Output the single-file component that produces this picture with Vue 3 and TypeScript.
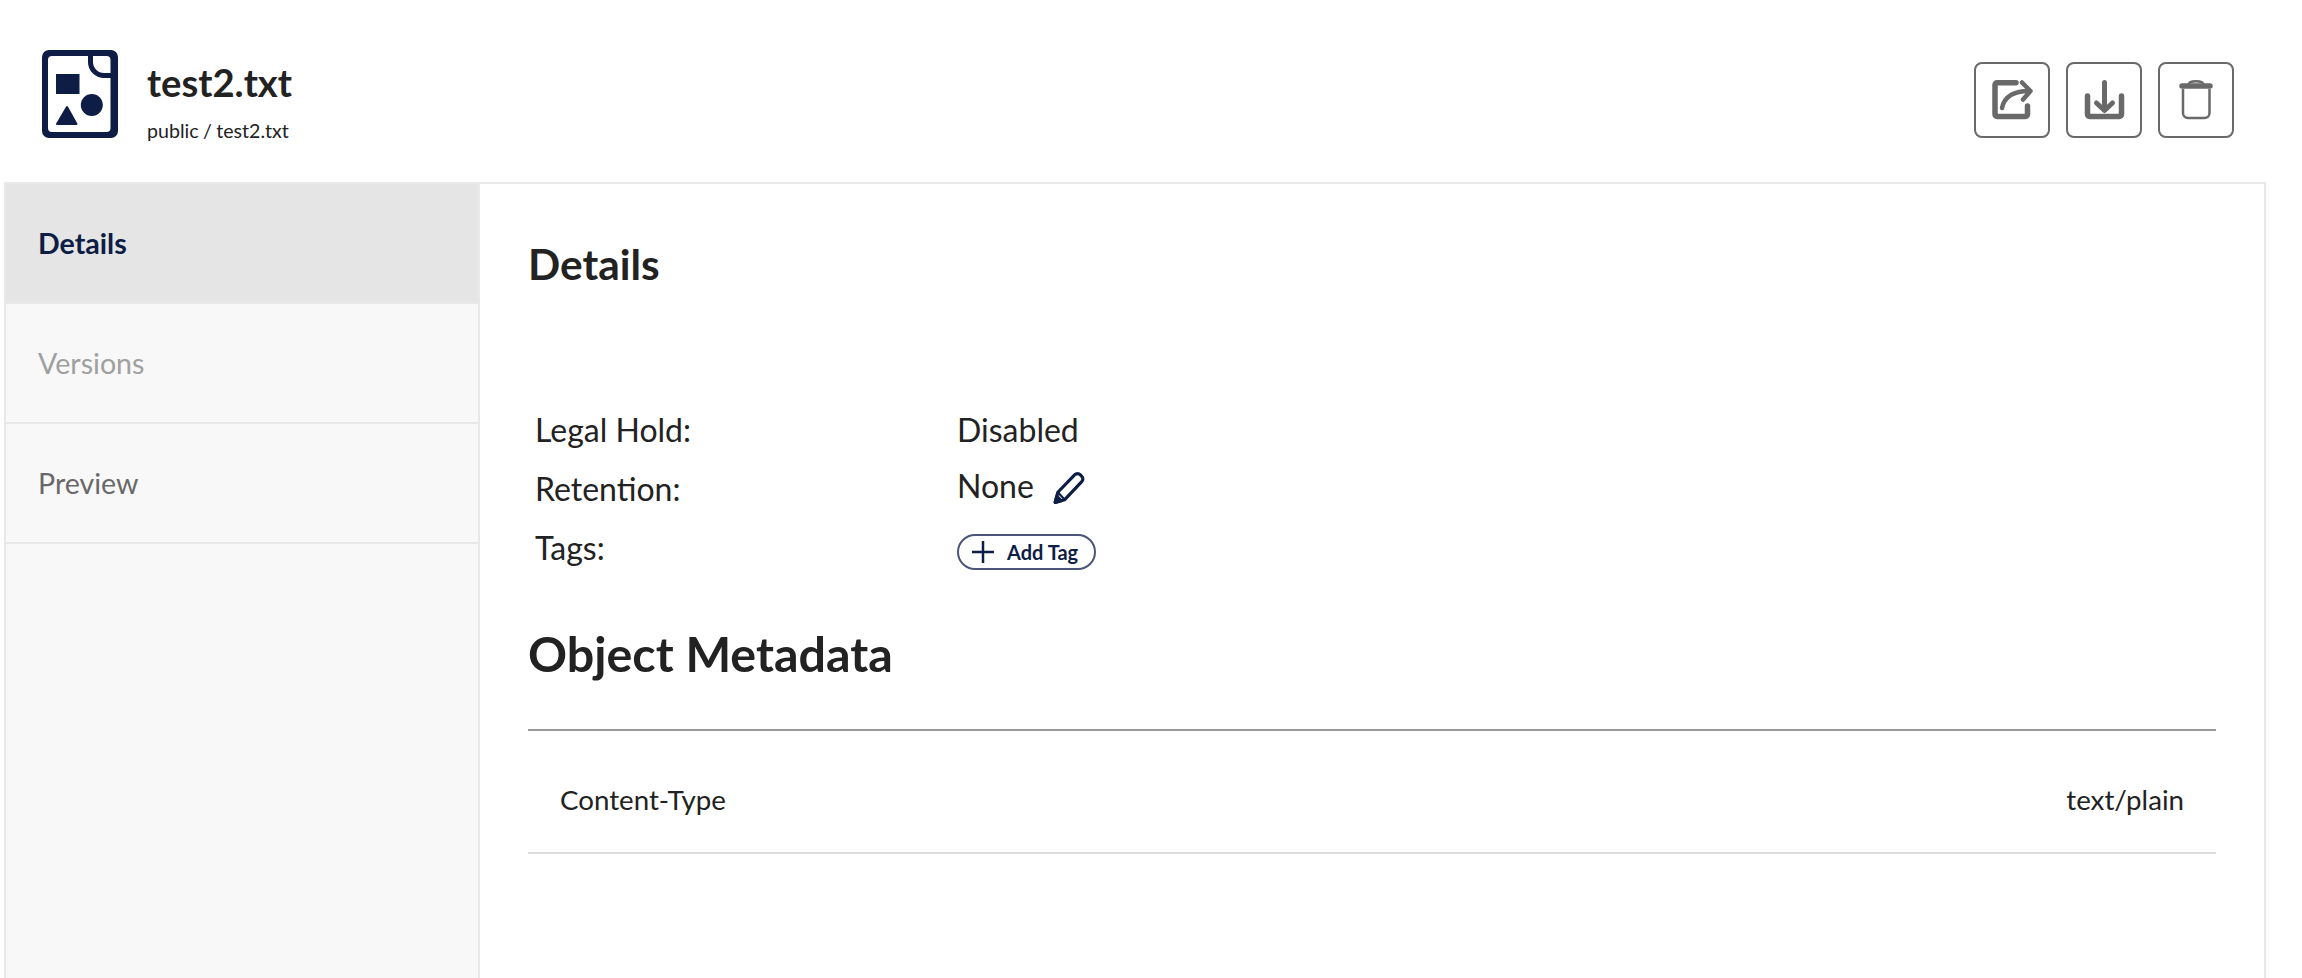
<script setup lang="ts">
const tabs = [
  { label: 'Details', cls: 'active' },
  { label: 'Versions', cls: 'disabled' },
  { label: 'Preview', cls: '' },
]
</script>

<template>
  <div class="page">
    <header class="top">
      <div class="ident">
        <svg class="file-icon" width="76" height="88" viewBox="0 0 76 88">
          <path fill-rule="evenodd" fill="#0d1d45" d="M7 0H69a7 7 0 0 1 7 7V81a7 7 0 0 1-7 7H7a7 7 0 0 1-7-7V7a7 7 0 0 1 7-7ZM10 6a4 4 0 0 0-4 4V78a4 4 0 0 0 4 4H64.500a4 4 0 0 0 4-4V28H62A16 16 0 0 1 46 12V6ZM51 6V12A11 11 0 0 0 62 23H68.500V10a4 4 0 0 0-4-4Z"/>
          <rect x="14" y="24" width="23.5" height="20" fill="#0d1d45"/>
          <circle cx="49.8" cy="55" r="11" fill="#0d1d45"/>
          <path d="M25 57L34.500 74H15Z" fill="#0d1d45" stroke="#0d1d45" stroke-width="2" stroke-linejoin="round"/>
        </svg>
        <div class="names">
          <h1 class="fname">test2.txt</h1>
          <div class="path">public / test2.txt</div>
        </div>
      </div>
      <div class="actions">
        <button class="act" type="button" aria-label="Share">
          <svg width="42" height="42" viewBox="0 0 42 42" fill="none" stroke="#696969">
            <path d="M25 3.800H6a2 2 0 0 0-2 2V35.500a2 2 0 0 0 2 2H34.500a2 2 0 0 0 2-2V27" stroke-width="5.500" stroke-linecap="round" stroke-linejoin="round"/>
            <path d="M11 29C13 19 21 12 38 12" stroke-width="4.500" stroke-linecap="round"/>
            <path d="M31 3.500L39.500 12L32 20.500" stroke-width="4.500" stroke-linecap="round" stroke-linejoin="round"/>
          </svg>
        </button>
        <button class="act" type="button" aria-label="Download">
          <svg width="42" height="42" viewBox="0 0 42 42" fill="none" stroke="#696969">
            <path d="M4.500 17V35.500a2 2 0 0 0 2 2H36.500a2 2 0 0 0 2-2V17" stroke-width="5.500" stroke-linecap="round" stroke-linejoin="round"/>
            <path d="M21.500 3.500V30" stroke-width="5" stroke-linecap="round"/>
            <path d="M13.500 24L21.500 31.500L29.500 24" stroke-width="5" stroke-linecap="round" stroke-linejoin="round"/>
          </svg>
        </button>
        <button class="act" type="button" aria-label="Delete">
          <svg width="42" height="42" viewBox="0 0 42 42" fill="none" stroke="#696969">
            <path d="M7 7H35" stroke-width="5.500" stroke-linecap="round"/>
            <path d="M14 5C14 2.500 17 2.200 21 2.200S28 2.500 28 5" stroke-width="2.500"/>
            <path d="M8 10V34a5 5 0 0 0 5 5H29.500a5 5 0 0 0 5-5V10" stroke-width="2.500"/>
          </svg>
        </button>
      </div>
    </header>

    <section class="panel">
      <nav class="side">
        <div v-for="t in tabs" :key="t.label" class="tab" :class="t.cls">{{ t.label }}</div>
      </nav>
      <main class="content">
        <h2 class="sub">Details</h2>
        <div class="facts">
          <div class="fact">
            <span class="k">Legal Hold:</span>
            <span class="v">Disabled</span>
          </div>
          <div class="fact">
            <span class="k">Retention:</span>
            <span class="v none">None
              <svg class="pen" width="34" height="34" viewBox="0 0 32 32" fill="none" stroke="#0d1d45" stroke-width="3" stroke-linejoin="round">
                <path d="M21.500 3.500a3.500 3.500 0 0 1 5 0l1.500 1.500a3.500 3.500 0 0 1 0 5L12 27L3 29.500L5.500 20Z"/>
                <path d="M5.500 20L12 27" stroke-width="2"/>
                <path d="M3 29.500L4.500 24L8.500 28Z" fill="#0d1d45"/>
              </svg>
            </span>
          </div>
          <div class="fact">
            <span class="k">Tags:</span>
            <span class="v">
              <span class="tag">
                <svg width="22" height="22" viewBox="0 0 22 22" stroke="#0d1d45" stroke-width="2.500" fill="none"><path d="M11 0V22M0 11H22"/></svg>
                Add Tag
              </span>
            </span>
          </div>
        </div>
        <h2 class="meta-title">Object Metadata</h2>
        <div class="meta">
          <div class="meta-row">
            <span>Content-Type</span>
            <span>text/plain</span>
          </div>
        </div>
      </main>
    </section>
  </div>
</template>

<style scoped>
.page {
  width: 2302px;
  height: 978px;
  overflow: hidden;
  background: #fff;
  font-family: Lato, "Liberation Sans", sans-serif;
  color: #222;
  display: flex;
  flex-direction: column;
}
.top {
  height: 182px;
  flex: none;
  display: flex;
  align-items: center;
  justify-content: space-between;
  padding: 0 68px 0 42px;
  box-sizing: border-box;
}
.ident {
  display: flex;
  align-items: flex-start;
  height: 88px;
  gap: 29px;
  margin-top: 6px;
}
.file-icon { display: block; }
.names { padding-top: 10px; }
.fname {
  margin: 0;
  font-size: 38.2px;
  line-height: 44px;
  font-weight: 700;
}
.path {
  margin-top: 14.5px;
  font-size: 19.6px;
  line-height: 24px;
  word-spacing: -0.6px;
}
.actions {
  display: flex;
  gap: 16px;
  margin-top: 18px;
}
.act {
  width: 76px;
  height: 76px;
  padding: 0;
  background: #fff;
  border: 2px solid #696969;
  border-radius: 8px;
  display: flex;
  align-items: center;
  justify-content: center;
}
.panel {
  flex: 1;
  margin: 0 36px 0 4px;
  display: flex;
  border-top: 2px solid #e8e8e8;
  border-right: 2px solid #e8e8e8;
  min-height: 0;
}
.side {
  width: 476px;
  flex: none;
  background: #f8f8f8;
  border-left: 2px solid #e8e8e8;
  border-right: 2px solid #e8e8e8;
  box-sizing: border-box;
}
.tab {
  height: 120px;
  box-sizing: border-box;
  border-bottom: 2px solid #e8e8e8;
  display: flex;
  align-items: center;
  padding: 0 0 1px 32px;
  font-size: 28.6px;
  color: #696969;
}
.tab.active {
  background: #e5e5e5;
  color: #0d1d45;
  font-weight: 700;
}
.tab.disabled { color: #a0a0a0; }
.content {
  flex: 1;
  padding: 0 48px;
  min-width: 0;
}
.sub {
  margin: 56px 0 0;
  font-size: 42.4px;
  line-height: 48px;
  font-weight: 700;
}
.facts {
  margin-top: 122px;
  padding-left: 7px;
}
.fact {
  display: flex;
  align-items: flex-start;
  height: 59px;
  font-size: 32px;
  line-height: 40px;
}
.k { width: 422px; flex: none; }
.v { display: flex; align-items: center; gap: 18px; }
.none { margin-top: -3px; }
.pen { display: block; margin-top: 4px; }
.tag {
  display: inline-flex;
  align-items: center;
  gap: 13px;
  height: 36px;
  box-sizing: border-box;
  border: 2px solid #4a5578;
  border-radius: 18px;
  padding: 0 16px 0 13px;
  margin-top: 6px;
  font-size: 20px;
  font-weight: 700;
  color: #0d1d45;
  background: #fff;
}
.meta-title {
  margin: 36px 0 0;
  font-size: 48.4px;
  line-height: 60px;
  font-weight: 700;
}
.meta {
  margin-top: 46px;
  border-top: 2px solid #999;
}
.meta-row {
  height: 123px;
  box-sizing: border-box;
  border-bottom: 2px solid #ddd;
  display: flex;
  justify-content: space-between;
  align-items: center;
  padding: 16px 32px 0;
  font-size: 27.7px;
}
</style>
